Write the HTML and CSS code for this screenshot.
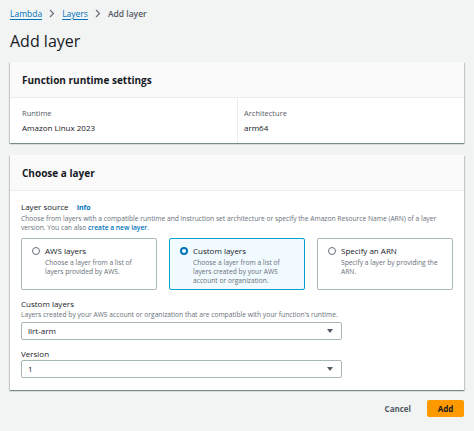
FILE: index.html
```html
<!DOCTYPE html>
<html lang="en">
<head>
    <meta charset="UTF-8">
    <title>Add layer</title>
    <link rel="stylesheet" href="styles.css">
</head>
<body>
    <div class="page">
        <nav class="breadcrumbs">
            <a href="#">Lambda</a>
            <svg class="sep" width="6" height="9" viewBox="0 0 6 9"><path d="M1 1l3.5 3.5L1 8" fill="none" stroke="#687078" stroke-width="1.2"/></svg>
            <a href="#">Layers</a>
            <svg class="sep" width="6" height="9" viewBox="0 0 6 9"><path d="M1 1l3.5 3.5L1 8" fill="none" stroke="#687078" stroke-width="1.2"/></svg>
            <span class="current">Add layer</span>
        </nav>

        <h1 class="page-title">Add layer</h1>

        <!-- Runtime settings -->
        <div class="card">
            <div class="card-header">Function runtime settings</div>
            <div class="card-body columns">
                <div class="column">
                    <div class="kv-label">Runtime</div>
                    <div class="kv-value">Amazon Linux 2023</div>
                </div>
                <div class="column">
                    <div class="kv-label">Architecture</div>
                    <div class="kv-value">arm64</div>
                </div>
            </div>
        </div>

        <!-- Layer choice -->
        <div class="card">
            <div class="card-header">Choose a layer</div>
            <div class="card-body form">
                <div class="field">
                    <div class="field-label">Layer source <a class="info" href="#">Info</a></div>
                    <div class="field-desc">Choose from layers with a compatible runtime and instruction set architecture or specify the Amazon Resource Name (ARN) of a layer version. You can also <a href="#">create a new layer</a>.</div>
                    <div class="tiles">
                        <div class="tile">
                            <span class="radio"></span>
                            <div>
                                <div class="tile-title">AWS layers</div>
                                <div class="tile-desc">Choose a layer from a list of layers provided by AWS.</div>
                            </div>
                        </div>
                        <div class="tile selected">
                            <span class="radio"></span>
                            <div>
                                <div class="tile-title">Custom layers</div>
                                <div class="tile-desc">Choose a layer from a list of layers created by your AWS account or organization.</div>
                            </div>
                        </div>
                        <div class="tile">
                            <span class="radio"></span>
                            <div>
                                <div class="tile-title">Specify an ARN</div>
                                <div class="tile-desc">Specify a layer by providing the ARN.</div>
                            </div>
                        </div>
                    </div>
                </div>

                <div class="field">
                    <div class="field-label">Custom layers</div>
                    <div class="field-desc">Layers created by your AWS account or organization that are compatible with your function's runtime.</div>
                    <div class="select">llrt-arm<span class="caret"></span></div>
                </div>

                <div class="field">
                    <div class="field-label">Version</div>
                    <div class="select">1<span class="caret"></span></div>
                </div>
            </div>
        </div>

        <div class="actions">
            <button class="btn-link">Cancel</button>
            <button class="btn-primary">Add</button>
        </div>
    </div>
</body>
</html>
```

FILE: styles.css
```css
body {
    margin: 0;
    background-color: #f2f3f3;
    font-family: "Open Sans", "Noto Sans", Arial, sans-serif;
    color: #16191f;
}

a {
    color: #0073bb;
    text-decoration: none;
}

.page {
    padding: 6px 10px 0 10px;
}

.breadcrumbs {
    display: flex;
    align-items: center;
    gap: 7px;
    font-size: 8.5px;
    height: 14px;
}

.breadcrumbs a {
    color: #0073bb;
    text-decoration: underline;
    text-underline-offset: 2px;
}

.breadcrumbs .current {
    color: #545b64;
    font-weight: 600;
}

.page-title {
    font-size: 16px;
    font-weight: 400;
    margin: 9px 0 0 0;
    height: 33px;
    line-height: 24px;
}

/* Containers */
.card {
    background-color: #fff;
    box-shadow: 0 1px 1px 0 rgba(0, 28, 36, 0.3), 1px 1px 1px 0 rgba(0, 28, 36, 0.15), -1px 1px 1px 0 rgba(0, 28, 36, 0.15);
    margin-bottom: 12px;
}

.card-header {
    background-color: #fafafa;
    border-bottom: 1px solid #eaeded;
    height: 35px;
    padding: 0 12px;
    display: flex;
    align-items: center;
    font-size: 10px;
    font-weight: 700;
}

.card-body {
    padding: 10px 12px;
}

.columns {
    display: grid;
    grid-template-columns: 1fr 1fr;
    padding: 0;
}

.column {
    padding: 9px 12px 9px 12px;
}

.column + .column {
    border-left: 1px solid #eaeded;
    padding-left: 6px;
}

.kv-label {
    font-size: 7.5px;
    color: #545b64;
    line-height: 12px;
}

.kv-value {
    font-size: 8px;
    line-height: 13px;
    margin-top: 2px;
}

/* Form */
.form {
    padding: 10px 11px 12px 11px;
}

.field + .field {
    margin-top: 8px;
}

.field-label {
    font-size: 8px;
    line-height: 12px;
}

.info {
    font-weight: 700;
    font-size: 7px;
    margin-left: 6px;
}

.field-desc {
    font-size: 6.7px;
    color: #687078;
    line-height: 9px;
    margin-bottom: 3px;
}

.field-desc a {
    font-weight: 600;
}

.tiles {
    display: grid;
    grid-template-columns: repeat(3, 1fr);
    gap: 12px;
    margin-top: 6px;
}

.tile {
    display: flex;
    gap: 5px;
    border: 1px solid #aab7b8;
    border-radius: 2px;
    padding: 6px 8px 6px 10px;
    height: 52px;
    box-sizing: border-box;
}

.tile.selected {
    background-color: #f1faff;
    border-color: #00a1c9;
}

.radio {
    flex: none;
    width: 8px;
    height: 8px;
    margin-top: 2px;
    border: 1px solid #687078;
    border-radius: 50%;
    box-sizing: border-box;
    background-color: #fff;
}

.tile.selected .radio {
    border: 2.5px solid #0073bb;
    background-color: #fff;
}

.tile-title {
    font-size: 8px;
    line-height: 11px;
}

.tile-desc {
    font-size: 6.7px;
    line-height: 9px;
    color: #687078;
    margin-top: 2px;
}

.select {
    position: relative;
    width: 321px;
    height: 18px;
    box-sizing: border-box;
    border: 1px solid #aab7b8;
    border-radius: 2px;
    padding: 0 6px;
    font-size: 8px;
    line-height: 16px;
}

.caret {
    position: absolute;
    right: 8px;
    top: 6px;
    width: 0;
    height: 0;
    border-left: 3px solid transparent;
    border-right: 3px solid transparent;
    border-top: 4px solid #545b64;
}

/* Footer buttons */
.actions {
    display: flex;
    justify-content: flex-end;
    align-items: center;
    gap: 16px;
    margin-top: -2px;
}

.actions button {
    font-family: inherit;
    font-size: 8px;
    font-weight: 700;
    border: none;
    cursor: pointer;
}

.btn-link {
    background: none;
    color: #545b64;
    padding: 0;
}

.btn-primary {
    background-color: #ff9900;
    color: #16191f;
    width: 37px;
    height: 17px;
    border-radius: 2px;
}
```
